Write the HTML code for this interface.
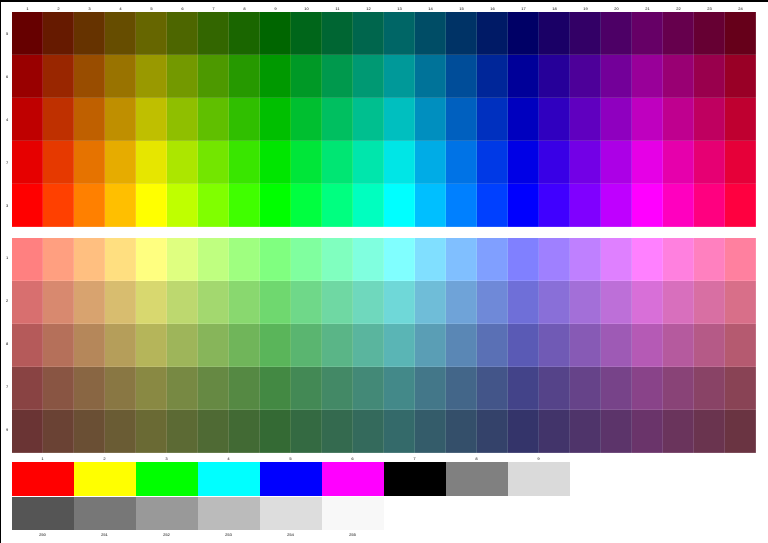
<!DOCTYPE html>
<html><head><meta charset="utf-8"><style>
html,body{margin:0;padding:0;background:#fff;width:768px;height:543px;overflow:hidden;font-family:"Liberation Sans",sans-serif}
.frame{position:absolute;left:0;top:0;width:768px;height:2px;background:#000}
.frameL{position:absolute;left:0;top:0;width:1px;height:543px;background:#000}
.grid{position:absolute;left:12px;width:744px;display:grid;grid-template-columns:repeat(24,31px);grid-auto-rows:43px}
.grid i{display:block;box-shadow:inset -1px 0 0 rgba(255,255,255,.12),inset 0 -1px 0 rgba(255,255,255,.12)}
.t1 i{background:hsl(var(--h),100%,20%)}
.t2 i{background:hsl(var(--h),100%,30%)}
.t3 i{background:hsl(var(--h),100%,37.5%)}
.t4 i{background:hsl(var(--h),100%,45%)}
.t5 i{background:hsl(var(--h),100%,50%)}
.b1 i{background:hsl(var(--h),100%,75%)}
.b2 i{background:hsl(var(--h),57%,64%)}
.b3 i{background:hsl(var(--h),38%,53%)}
.b4 i{background:hsl(var(--h),34%,40%)}
.b5 i{background:hsl(var(--h),34%,31%)}
.row{display:contents}
.lab{position:absolute;font-size:4px;color:#000;text-align:center;width:31px}
.rl{position:absolute;left:6px;font-size:4px}
.sw{position:absolute;width:62px;height:34px}
</style></head><body>
<div class="frame"></div><div class="frameL"></div>

<div class="lab" style="left:12px;top:6px">1</div><div class="lab" style="left:43px;top:6px">2</div><div class="lab" style="left:74px;top:6px">3</div><div class="lab" style="left:105px;top:6px">4</div><div class="lab" style="left:136px;top:6px">5</div><div class="lab" style="left:167px;top:6px">6</div><div class="lab" style="left:198px;top:6px">7</div><div class="lab" style="left:229px;top:6px">8</div><div class="lab" style="left:260px;top:6px">9</div><div class="lab" style="left:291px;top:6px">10</div><div class="lab" style="left:322px;top:6px">11</div><div class="lab" style="left:353px;top:6px">12</div><div class="lab" style="left:384px;top:6px">13</div><div class="lab" style="left:415px;top:6px">14</div><div class="lab" style="left:446px;top:6px">15</div><div class="lab" style="left:477px;top:6px">16</div><div class="lab" style="left:508px;top:6px">17</div><div class="lab" style="left:539px;top:6px">18</div><div class="lab" style="left:570px;top:6px">19</div><div class="lab" style="left:601px;top:6px">20</div><div class="lab" style="left:632px;top:6px">21</div><div class="lab" style="left:663px;top:6px">22</div><div class="lab" style="left:694px;top:6px">23</div><div class="lab" style="left:725px;top:6px">24</div>

<div class="rl" style="top:31px">5</div><div class="rl" style="top:74px">6</div><div class="rl" style="top:117px">4</div><div class="rl" style="top:160px">7</div><div class="rl" style="top:203px">3</div>
<div class="rl" style="top:255px">1</div><div class="rl" style="top:298px">2</div><div class="rl" style="top:341px">8</div><div class="rl" style="top:384px">7</div><div class="rl" style="top:427px">9</div>

<div class="grid" style="top:12px">
<div class="row t1"><i style="--h:0"></i><i style="--h:15"></i><i style="--h:30"></i><i style="--h:45"></i><i style="--h:60"></i><i style="--h:75"></i><i style="--h:90"></i><i style="--h:105"></i><i style="--h:120"></i><i style="--h:135"></i><i style="--h:150"></i><i style="--h:165"></i><i style="--h:180"></i><i style="--h:195"></i><i style="--h:210"></i><i style="--h:225"></i><i style="--h:240"></i><i style="--h:255"></i><i style="--h:270"></i><i style="--h:285"></i><i style="--h:300"></i><i style="--h:315"></i><i style="--h:330"></i><i style="--h:345"></i></div>
<div class="row t2"><i style="--h:0"></i><i style="--h:15"></i><i style="--h:30"></i><i style="--h:45"></i><i style="--h:60"></i><i style="--h:75"></i><i style="--h:90"></i><i style="--h:105"></i><i style="--h:120"></i><i style="--h:135"></i><i style="--h:150"></i><i style="--h:165"></i><i style="--h:180"></i><i style="--h:195"></i><i style="--h:210"></i><i style="--h:225"></i><i style="--h:240"></i><i style="--h:255"></i><i style="--h:270"></i><i style="--h:285"></i><i style="--h:300"></i><i style="--h:315"></i><i style="--h:330"></i><i style="--h:345"></i></div>
<div class="row t3"><i style="--h:0"></i><i style="--h:15"></i><i style="--h:30"></i><i style="--h:45"></i><i style="--h:60"></i><i style="--h:75"></i><i style="--h:90"></i><i style="--h:105"></i><i style="--h:120"></i><i style="--h:135"></i><i style="--h:150"></i><i style="--h:165"></i><i style="--h:180"></i><i style="--h:195"></i><i style="--h:210"></i><i style="--h:225"></i><i style="--h:240"></i><i style="--h:255"></i><i style="--h:270"></i><i style="--h:285"></i><i style="--h:300"></i><i style="--h:315"></i><i style="--h:330"></i><i style="--h:345"></i></div>
<div class="row t4"><i style="--h:0"></i><i style="--h:15"></i><i style="--h:30"></i><i style="--h:45"></i><i style="--h:60"></i><i style="--h:75"></i><i style="--h:90"></i><i style="--h:105"></i><i style="--h:120"></i><i style="--h:135"></i><i style="--h:150"></i><i style="--h:165"></i><i style="--h:180"></i><i style="--h:195"></i><i style="--h:210"></i><i style="--h:225"></i><i style="--h:240"></i><i style="--h:255"></i><i style="--h:270"></i><i style="--h:285"></i><i style="--h:300"></i><i style="--h:315"></i><i style="--h:330"></i><i style="--h:345"></i></div>
<div class="row t5"><i style="--h:0"></i><i style="--h:15"></i><i style="--h:30"></i><i style="--h:45"></i><i style="--h:60"></i><i style="--h:75"></i><i style="--h:90"></i><i style="--h:105"></i><i style="--h:120"></i><i style="--h:135"></i><i style="--h:150"></i><i style="--h:165"></i><i style="--h:180"></i><i style="--h:195"></i><i style="--h:210"></i><i style="--h:225"></i><i style="--h:240"></i><i style="--h:255"></i><i style="--h:270"></i><i style="--h:285"></i><i style="--h:300"></i><i style="--h:315"></i><i style="--h:330"></i><i style="--h:345"></i></div>
</div>

<div class="grid" style="top:238px">
<div class="row b1"><i style="--h:0"></i><i style="--h:15"></i><i style="--h:30"></i><i style="--h:45"></i><i style="--h:60"></i><i style="--h:75"></i><i style="--h:90"></i><i style="--h:105"></i><i style="--h:120"></i><i style="--h:135"></i><i style="--h:150"></i><i style="--h:165"></i><i style="--h:180"></i><i style="--h:195"></i><i style="--h:210"></i><i style="--h:225"></i><i style="--h:240"></i><i style="--h:255"></i><i style="--h:270"></i><i style="--h:285"></i><i style="--h:300"></i><i style="--h:315"></i><i style="--h:330"></i><i style="--h:345"></i></div>
<div class="row b2"><i style="--h:0"></i><i style="--h:15"></i><i style="--h:30"></i><i style="--h:45"></i><i style="--h:60"></i><i style="--h:75"></i><i style="--h:90"></i><i style="--h:105"></i><i style="--h:120"></i><i style="--h:135"></i><i style="--h:150"></i><i style="--h:165"></i><i style="--h:180"></i><i style="--h:195"></i><i style="--h:210"></i><i style="--h:225"></i><i style="--h:240"></i><i style="--h:255"></i><i style="--h:270"></i><i style="--h:285"></i><i style="--h:300"></i><i style="--h:315"></i><i style="--h:330"></i><i style="--h:345"></i></div>
<div class="row b3"><i style="--h:0"></i><i style="--h:15"></i><i style="--h:30"></i><i style="--h:45"></i><i style="--h:60"></i><i style="--h:75"></i><i style="--h:90"></i><i style="--h:105"></i><i style="--h:120"></i><i style="--h:135"></i><i style="--h:150"></i><i style="--h:165"></i><i style="--h:180"></i><i style="--h:195"></i><i style="--h:210"></i><i style="--h:225"></i><i style="--h:240"></i><i style="--h:255"></i><i style="--h:270"></i><i style="--h:285"></i><i style="--h:300"></i><i style="--h:315"></i><i style="--h:330"></i><i style="--h:345"></i></div>
<div class="row b4"><i style="--h:0"></i><i style="--h:15"></i><i style="--h:30"></i><i style="--h:45"></i><i style="--h:60"></i><i style="--h:75"></i><i style="--h:90"></i><i style="--h:105"></i><i style="--h:120"></i><i style="--h:135"></i><i style="--h:150"></i><i style="--h:165"></i><i style="--h:180"></i><i style="--h:195"></i><i style="--h:210"></i><i style="--h:225"></i><i style="--h:240"></i><i style="--h:255"></i><i style="--h:270"></i><i style="--h:285"></i><i style="--h:300"></i><i style="--h:315"></i><i style="--h:330"></i><i style="--h:345"></i></div>
<div class="row b5"><i style="--h:0"></i><i style="--h:15"></i><i style="--h:30"></i><i style="--h:45"></i><i style="--h:60"></i><i style="--h:75"></i><i style="--h:90"></i><i style="--h:105"></i><i style="--h:120"></i><i style="--h:135"></i><i style="--h:150"></i><i style="--h:165"></i><i style="--h:180"></i><i style="--h:195"></i><i style="--h:210"></i><i style="--h:225"></i><i style="--h:240"></i><i style="--h:255"></i><i style="--h:270"></i><i style="--h:285"></i><i style="--h:300"></i><i style="--h:315"></i><i style="--h:330"></i><i style="--h:345"></i></div>
</div>

<div class="lab" style="left:27px;top:456px">1</div><div class="lab" style="left:89px;top:456px">2</div><div class="lab" style="left:151px;top:456px">3</div><div class="lab" style="left:213px;top:456px">4</div><div class="lab" style="left:275px;top:456px">5</div><div class="lab" style="left:337px;top:456px">6</div><div class="lab" style="left:399px;top:456px">7</div><div class="lab" style="left:461px;top:456px">8</div><div class="lab" style="left:523px;top:456px">9</div>

<div class="sw" style="left:12px;top:462px;background:#ff0000"></div>
<div class="sw" style="left:74px;top:462px;background:#ffff00"></div>
<div class="sw" style="left:136px;top:462px;background:#00ff00"></div>
<div class="sw" style="left:198px;top:462px;background:#00ffff"></div>
<div class="sw" style="left:260px;top:462px;background:#0000ff"></div>
<div class="sw" style="left:322px;top:462px;background:#ff00ff"></div>
<div class="sw" style="left:384px;top:462px;background:#000000"></div>
<div class="sw" style="left:446px;top:462px;background:#808080"></div>
<div class="sw" style="left:508px;top:462px;background:#dadada"></div>

<div class="sw" style="left:12px;top:497px;height:33px;background:#555555"></div>
<div class="sw" style="left:74px;top:497px;height:33px;background:#777777"></div>
<div class="sw" style="left:136px;top:497px;height:33px;background:#999999"></div>
<div class="sw" style="left:198px;top:497px;height:33px;background:#bbbbbb"></div>
<div class="sw" style="left:260px;top:497px;height:33px;background:#dddddd"></div>
<div class="sw" style="left:322px;top:497px;height:33px;background:#f8f8f8"></div>

<div class="lab" style="left:27px;top:532px">250</div><div class="lab" style="left:89px;top:532px">251</div><div class="lab" style="left:151px;top:532px">252</div><div class="lab" style="left:213px;top:532px">253</div><div class="lab" style="left:275px;top:532px">254</div><div class="lab" style="left:337px;top:532px">255</div>
</body></html>
